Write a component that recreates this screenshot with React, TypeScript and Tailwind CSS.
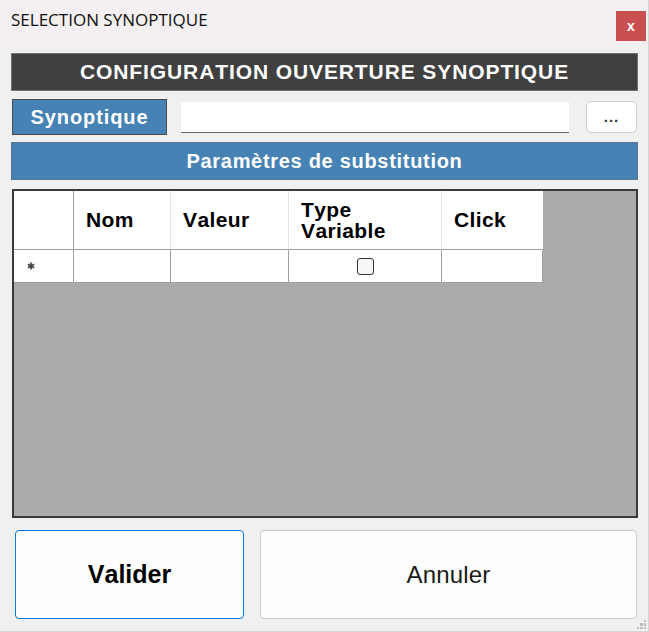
import React from 'react';

const font = { fontFamily: '"Liberation Sans", Arial, sans-serif', fontKerning: 'none' as const };

export default function App() {
  return (
    <div className="w-[649px] h-[632px] bg-[#f0f0f0] flex flex-col relative border-r border-b border-[#d6d6d6]" style={font}>
      {/* title bar */}
      <div className="h-[45px] bg-[#f4eff0] flex items-start justify-between shrink-0">
        <div
          className="pl-[11px] pt-[9px] text-[17px] leading-[22px] text-[#111]"
          style={{ fontFamily: '"Open Sans", "Noto Sans", sans-serif' }}
        >
          SELECTION SYNOPTIQUE
        </div>
        <button className="mt-[11px] mr-[2px] w-[30px] h-[30px] bg-[#c85050] text-white font-bold text-[14px] leading-none flex items-center justify-center">
          x
        </button>
      </div>

      <div className="pl-[11px] pr-[10px] flex flex-col">
        {/* dark header */}
        <div className="mt-[8px] h-[38px] bg-[#404040] border border-[#707070] flex items-center justify-center text-white font-bold text-[21px] tracking-[0.9px]">
          CONFIGURATION OUVERTURE SYNOPTIQUE
        </div>

        {/* synoptique row */}
        <div className="mt-[8px] h-[36px] flex items-start">
          <div className="ml-px w-[155px] h-[36px] bg-[#4682b4] border border-[#4a4a4a] flex items-center justify-center text-white font-bold text-[20px] tracking-[0.9px]">
            Synoptique
          </div>
          <div className="ml-[14px] mt-[3px] w-[388px] h-[31px] bg-white border-b border-[#6a6a6a]" />
          <button className="ml-[17px] mt-[2px] w-[51px] h-[32px] bg-white border border-[#d0d0d0] rounded-[5px] text-[15px] font-bold tracking-[1px] text-[#333] leading-none flex items-end justify-center pb-[8px]">
            ...
          </button>
        </div>

        {/* parameters bar */}
        <div className="mt-[7px] h-[38px] bg-[#4682b4] border border-[#5a7590] flex items-center justify-center text-white font-bold text-[20px] tracking-[0.7px]">
          Paramètres de substitution
        </div>

        {/* grid */}
        <div className="mt-[9px] ml-px h-[329px] bg-[#ababab] border-2 border-[#3a3a3a]">
          <div className="grid grid-cols-[60px_97px_118px_153px_101px] w-[529px] font-bold text-[21px] tracking-[0.4px] text-black">
            <div className="h-[59px] bg-white border-r border-b border-[#a0a0a0]" />
            <div className="h-[59px] bg-white border-r border-b border-r-[#e4e4e4] border-b-[#a0a0a0] flex items-center pl-[12px]">
              Nom
            </div>
            <div className="h-[59px] bg-white border-r border-b border-r-[#e4e4e4] border-b-[#a0a0a0] flex items-center pl-[12px]">
              Valeur
            </div>
            <div className="h-[59px] bg-white border-r border-b border-r-[#e4e4e4] border-b-[#a0a0a0] flex items-center pl-[12px] leading-[21px]">
              Type
              <br />
              Variable
            </div>
            <div className="h-[59px] bg-white border-b border-[#a0a0a0] flex items-center pl-[12px]">
              Click
            </div>

            <div className="h-[33px] bg-white border-r border-b border-[#a0a0a0] flex items-center pl-[13px]">
              <svg width="8" height="8" viewBox="0 0 8 8">
                <path d="M4 0.5V7.5M0.8 2.2L7.2 5.8M0.8 5.8L7.2 2.2" stroke="#444" strokeWidth="1.7" />
              </svg>
            </div>
            <div className="h-[33px] bg-white border-r border-b border-[#a0a0a0]" />
            <div className="h-[33px] bg-white border-r border-b border-[#a0a0a0]" />
            <div className="h-[33px] bg-white border-r border-b border-[#a0a0a0] flex items-center justify-center">
              <div className="w-[17px] h-[17px] rounded-[3px] border border-[#333] bg-[#f7f7f7]" />
            </div>
            <div className="h-[33px] bg-white border-r border-b border-[#a0a0a0]" />
          </div>
        </div>

        {/* buttons */}
        <div className="mt-[12px] flex">
          <button className="ml-[4px] w-[229px] h-[89px] bg-[#fdfdfd] border border-[#0078d7] rounded-[4px] font-bold text-[25px] text-black">
            Valider
          </button>
          <button className="ml-[16px] w-[377px] h-[89px] bg-[#fdfdfd] border border-[#cccccc] rounded-[4px] text-[24px] tracking-[0.2px] text-[#1a1a1a]">
            Annuler
          </button>
        </div>
      </div>

      {/* resize grip */}
      <div className="absolute right-[2px] bottom-[2px] grid grid-cols-3 gap-[1px] w-[9px] h-[9px]">
        <span />
        <span />
        <span className="bg-[#bdbdbd]" />
        <span />
        <span className="bg-[#bdbdbd]" />
        <span className="bg-[#bdbdbd]" />
        <span className="bg-[#bdbdbd]" />
        <span className="bg-[#bdbdbd]" />
        <span className="bg-[#bdbdbd]" />
      </div>
    </div>
  );
}
